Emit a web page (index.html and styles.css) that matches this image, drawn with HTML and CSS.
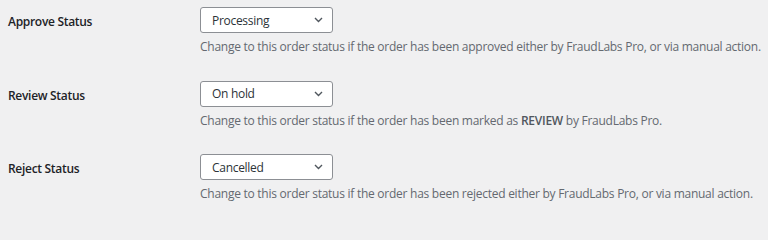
FILE: index.html
```html
<!DOCTYPE html>
<html>
<head>
<meta charset="utf-8">
<link rel="stylesheet" href="styles.css">
</head>
<body>
<div class="form">
  <div class="row">
    <div class="label">Approve Status</div>
    <div class="field">
      <div class="select"><span>Processing</span><svg class="chev" width="9" height="6" viewBox="0 0 9 6"><path d="M1 1 L4.5 4.5 L8 1" fill="none" stroke="#50575e" stroke-width="1.4"/></svg></div>
      <p class="desc">Change to this order status if the order has been approved either by FraudLabs Pro, or via manual action.</p>
    </div>
  </div>
  <div class="row">
    <div class="label">Review Status</div>
    <div class="field">
      <div class="select"><span>On hold</span><svg class="chev" width="9" height="6" viewBox="0 0 9 6"><path d="M1 1 L4.5 4.5 L8 1" fill="none" stroke="#50575e" stroke-width="1.4"/></svg></div>
      <p class="desc">Change to this order status if the order has been marked as <b>REVIEW</b> by FraudLabs Pro.</p>
    </div>
  </div>
  <div class="row">
    <div class="label">Reject Status</div>
    <div class="field">
      <div class="select"><span>Cancelled</span><svg class="chev" width="9" height="6" viewBox="0 0 9 6"><path d="M1 1 L4.5 4.5 L8 1" fill="none" stroke="#50575e" stroke-width="1.4"/></svg></div>
      <p class="desc">Change to this order status if the order has been rejected either by FraudLabs Pro, or via manual action.</p>
    </div>
  </div>
</div>
</body>
</html>
```
FILE: styles.css
```css
html, body {
  margin: 0;
  padding: 0;
  background: #f0f0f1;
}
body {
  font-family: "Open Sans", "Noto Sans", sans-serif;
  color: #1d2327;
}
.form {
  padding: 7px 0 0 8px;
  display: flex;
  flex-direction: column;
  gap: 25.5px;
}
.row {
  display: grid;
  grid-template-columns: 192px 1fr;
  height: 48px;
}
.label {
  font-size: 12px;
  font-weight: 600;
  letter-spacing: -0.3px;
  padding-top: 6px;
  line-height: 18px;
}
.field {
  display: flex;
  flex-direction: column;
}
.select {
  box-sizing: border-box;
  width: 133px;
  height: 26px;
  border: 1px solid #8c8f94;
  border-radius: 3px;
  background: #fff;
  display: flex;
  align-items: center;
  justify-content: space-between;
  padding: 0 9px 0 11px;
  font-size: 12px;
  letter-spacing: -0.3px;
  color: #2c3338;
}
.chev { display: block; }
.desc {
  margin: 6px 0 0;
  font-size: 12px;
  letter-spacing: -0.26px;
  line-height: 16px;
  color: #646970;
  white-space: nowrap;
}
.desc b { font-weight: 600; color: #50575e; }
```
